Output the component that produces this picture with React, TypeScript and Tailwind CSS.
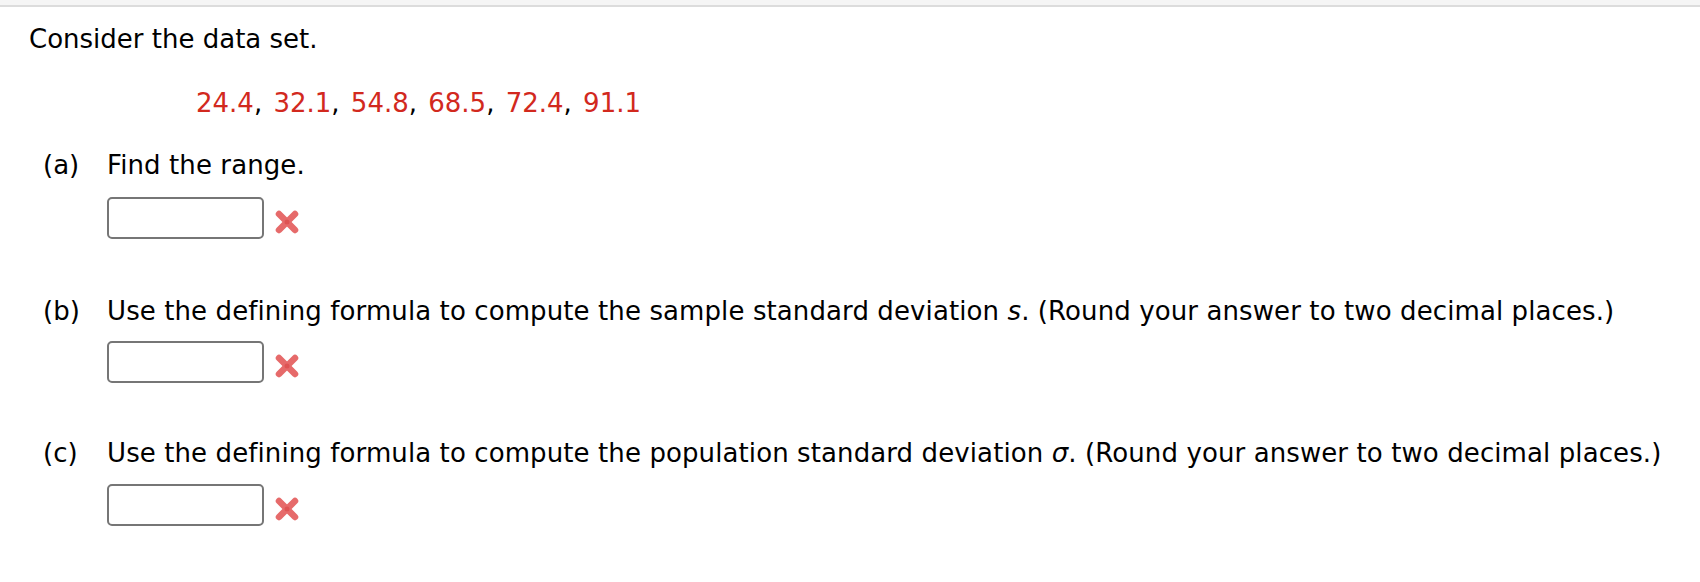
import React from 'react'

const values = ['24.4', '32.1', '54.8', '68.5', '72.4', '91.1']

function WrongMark() {
  return (
    <svg width="28" height="28" viewBox="0 0 28 28" className="shrink-0">
      <g stroke="#e45a5a" strokeWidth="6.5" strokeLinecap="round" opacity="0.9">
        <line x1="6" y1="6" x2="22" y2="22" />
        <line x1="22" y1="6" x2="6" y2="22" />
      </g>
      <circle cx="14" cy="14" r="2.5" fill="#d94444" opacity="0.6" />
    </svg>
  )
}

function AnswerBox() {
  return (
    <div className="flex items-center gap-[9px]">
      <div className="w-[157px] h-[42px] border-2 border-[#767676] rounded-[5px] bg-white" />
      <div className="mt-[8px]">
        <WrongMark />
      </div>
    </div>
  )
}

function Part({ label, children, className }: { label: string; children: React.ReactNode; className?: string }) {
  return (
    <div className={className}>
      <div className="flex leading-[30px] h-[30px]">
        <span className="w-[78px] pl-[14px] shrink-0">{label}</span>
        <span className="whitespace-nowrap tracking-[0.1px]">{children}</span>
      </div>
    </div>
  )
}

export default function App() {
  return (
    <div className="w-[1700px] h-[582px] bg-white text-black font-['DejaVu_Sans',Verdana,sans-serif] text-[26px] overflow-hidden">
      <div className="h-[7px] bg-[#f5f5f5] border-b-2 border-[#dcdcdc]" />

      <div className="pl-[29px]">
        <div className="mt-[17px] leading-[30px] h-[30px]">Consider the data set.</div>

        <div className="mt-[34px] leading-[30px] h-[30px] pl-[167px]">
          {values.map((v, i) => (
            <span key={v}>
              <span className="text-[#d2291e]">{v}</span>
              {i < values.length - 1 && <span className="mr-[3px]">, </span>}
            </span>
          ))}
        </div>

        <Part label="(a)" className="mt-[32px]">Find the range.</Part>
        <div className="mt-[17px] pl-[78px]">
          <AnswerBox />
        </div>

        <Part label="(b)" className="mt-[57px]">
          Use the defining formula to compute the sample standard deviation <i>s</i>. (Round your answer to two decimal places.)
        </Part>
        <div className="mt-[15px] pl-[78px]">
          <AnswerBox />
        </div>

        <Part label="(c)" className="mt-[55px]">
          Use the defining formula to compute the population standard deviation <i>σ</i>. (Round your answer to two decimal places.)
        </Part>
        <div className="mt-[16px] pl-[78px]">
          <AnswerBox />
        </div>
      </div>
    </div>
  )
}
